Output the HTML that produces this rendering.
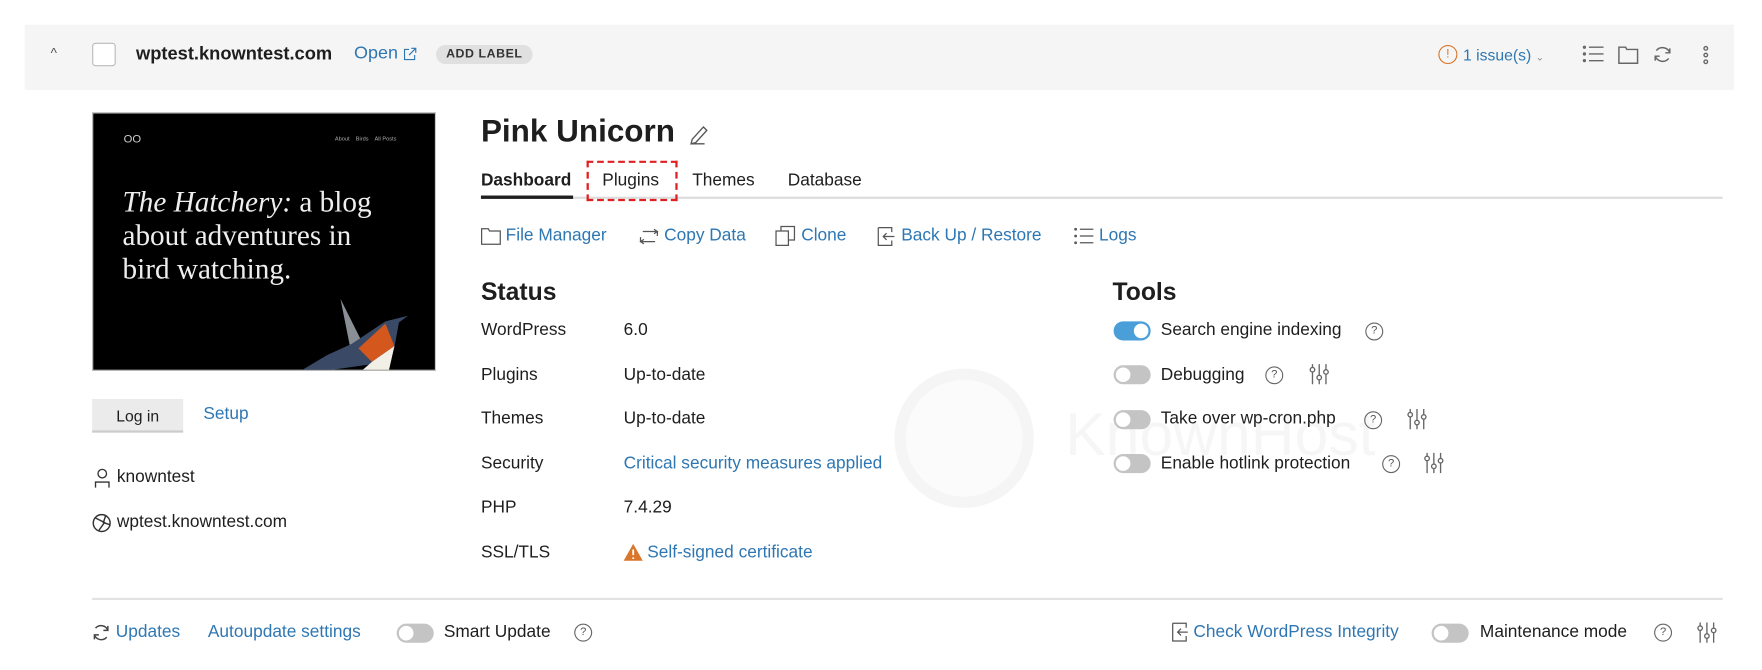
<!DOCTYPE html>
<html><head><meta charset="utf-8"><style>
*{margin:0;padding:0;box-sizing:border-box}
html,body{width:1762px;height:669px;overflow:hidden;background:#fff}
#w{position:absolute;left:0;top:0;width:1568px;height:596px;transform:scale(1.1237);transform-origin:0 0;font-family:"Liberation Sans",sans-serif;color:#1e1e1e;font-size:15.4px}
.a{position:absolute;white-space:nowrap}
.l{color:#2e77b3}
.tg{position:absolute;width:33px;height:17px;border-radius:9px;background:#c4c4c4}
.tg::after{content:"";position:absolute;left:2px;top:2px;width:13px;height:13px;border-radius:50%;background:#fff}
.tg.on{background:#4a9fd8}.tg.on::after{left:18px}
.q{position:absolute;width:16px;height:16px;border:1.3px solid #666;border-radius:50%;font-size:10px;text-align:center;line-height:14px;color:#555}
svg{position:absolute;overflow:visible}
</style></head><body><div id="w">
<div class="a" style="left:22px;top:22px;width:1521px;height:58px;background:#f5f5f5"></div>
<div class="a" style="left:45px;top:40px;font-size:12px;color:#555">^</div>
<div class="a" style="left:82px;top:38px;width:21px;height:21px;border:1px solid #bbb;border-radius:3px;background:#fff"></div>
<div class="a" style="left:121px;top:39px;font-size:16.3px;font-weight:bold">wptest.knowntest.com</div>
<div class="a l" style="left:315px;top:39px;font-size:16px">Open</div>
<svg style="left:359px;top:42px" width="12" height="12"><path d="M5 2H1v9h9V7M7 1h4v4M11 1L5 7" fill="none" stroke="#2e77b3" stroke-width="1"/></svg>
<div class="a" style="left:388px;top:40px;width:86px;height:17px;border-radius:9px;background:#e0e0e0;font-size:11px;font-weight:bold;text-align:center;line-height:17px;letter-spacing:.5px;color:#333">ADD LABEL</div>
<div class="a" style="left:1280px;top:40px;width:17px;height:17px;border:1.5px solid #d9762c;border-radius:50%;color:#d9762c;font-size:11px;text-align:center;line-height:14px">!</div>
<div class="a l" style="left:1302px;top:41px;font-size:14px">1 issue(s) <span style="font-size:9px;color:#888">&#8964;</span></div>
<svg style="left:1409px;top:41px" width="18" height="14"><g stroke="#666" stroke-width="1.3" fill="none"><path d="M5 1h13M5 7h13M5 13h13"/><circle cx="1" cy="1" r=".8"/><circle cx="1" cy="7" r=".8"/><circle cx="1" cy="13" r=".8"/></g></svg>
<svg style="left:1440px;top:41px" width="18" height="16"><path d="M.7 1h6l1 2h9.6v12.3H.7z" fill="none" stroke="#666" stroke-width="1.3"/></svg>
<svg style="left:1471px;top:40px" width="17" height="17"><path d="M3 5A7 7 0 0 1 15 7M14 12A7 7 0 0 1 2 10M15 3v4h-4M2 14v-4h4" fill="none" stroke="#666" stroke-width="1.3"/></svg>
<svg style="left:1515px;top:41px" width="6" height="16"><g fill="none" stroke="#666" stroke-width="1.2"><circle cx="3" cy="2" r="1.6"/><circle cx="3" cy="8" r="1.6"/><circle cx="3" cy="14" r="1.6"/></g></svg>

<div class="a" style="left:82px;top:100px;width:306px;height:230px;background:#000;border:1px solid #ccc;overflow:hidden">
<div class="a" style="left:27px;top:18px;color:#ccc;font-size:10px">OO</div>
<div class="a" style="left:215px;top:20px;color:#aaa;font-size:5px">About &nbsp;&nbsp; Birds &nbsp;&nbsp; All Posts</div>
<div class="a" style="left:26px;top:64px;color:#eee;font-family:'Liberation Serif',serif;font-size:26px;line-height:30px"><i>The Hatchery:</i> a blog<br>about adventures in<br>bird watching.</div>
<svg style="left:160px;top:165px" width="150" height="72"><path d="M60 0l20 40 -10 10z" fill="#8a8f96"/><path d="M70 40l30 -20 20 -5 -8 6 -4 22 -20 15 -70 10 30 -18z" fill="#3a4a66"/><path d="M100 22l8 20 -20 14 -12 -12z" fill="#d4581e"/><path d="M88 56l20 -14 -5 22 -30 5z" fill="#f2efe6"/></svg>
</div>
<div class="a" style="left:82px;top:355px;width:81px;height:30px;background:#ebebeb;border-bottom:2px solid #ccc;text-align:center;line-height:30px;font-size:14px">Log in</div>
<div class="a l" style="left:181px;top:360px">Setup</div>
<svg style="left:84px;top:417px" width="14" height="17"><g fill="none" stroke="#333" stroke-width="1.2"><circle cx="7" cy="4.5" r="3.8"/><path d="M1 17v-5h12v5"/></g></svg>
<div class="a" style="left:104px;top:416px">knowntest</div>
<svg style="left:82px;top:457px" width="17" height="17"><g fill="none" stroke="#333" stroke-width="1.3"><circle cx="8.5" cy="8.5" r="7.5"/><path d="M3 4l8 4-5 7M12 2l-2 6 6 2"/></g></svg>
<div class="a" style="left:104px;top:456px">wptest.knowntest.com</div>

<div class="a" style="left:428px;top:101px;font-size:28px;font-weight:bold">Pink Unicorn</div>
<svg style="left:614px;top:111px" width="17" height="18"><path d="M2 13l10-11 3 3-10 11-4 1zM1 17h12" fill="none" stroke="#555" stroke-width="1.2"/></svg>
<div class="a" style="left:428px;top:175px;width:1105px;height:2px;background:#ddd"></div>
<div class="a" style="left:428px;top:152px;font-weight:bold">Dashboard</div>
<div class="a" style="left:428px;top:174px;width:82px;height:3px;background:#1e1e1e"></div>
<div class="a" style="left:536px;top:152px">Plugins</div>
<div class="a" style="left:616px;top:152px">Themes</div>
<div class="a" style="left:701px;top:152px">Database</div>
<div class="a" style="left:522px;top:143px;width:81px;height:36px;border:2px dashed #e02020"></div>

<svg style="left:428px;top:203px" width="18" height="15"><path d="M.6.6h6l1 2h9.6v11.8H.6z" fill="none" stroke="#555" stroke-width="1.1"/></svg>
<div class="a l" style="left:450px;top:201px">File Manager</div>
<svg style="left:569px;top:203px" width="17" height="15"><path d="M3 3h13v4M14 12H1V8M13 1l3 2-3 2M4 10l-3 2 3 2" fill="none" stroke="#555" stroke-width="1.1"/></svg>
<div class="a l" style="left:591px;top:201px">Copy Data</div>
<svg style="left:690px;top:201px" width="18" height="18"><path d="M.6 4.6h11v12.8H.6zM5 4.6V.6h12v12h-5" fill="none" stroke="#555" stroke-width="1.1"/></svg>
<div class="a l" style="left:713px;top:201px">Clone</div>
<svg style="left:781px;top:202px" width="16" height="17"><path d="M.6.6h12v4M12.6 12v4.4H.6V.6M15 8.5H5M8 5.5l-3 3 3 3" fill="none" stroke="#555" stroke-width="1.1"/></svg>
<div class="a l" style="left:802px;top:201px">Back Up / Restore</div>
<svg style="left:956px;top:203px" width="17" height="14"><g stroke="#555" stroke-width="1.1" fill="none"><path d="M5 1h12M5 7h12M5 13h12"/><circle cx="1.2" cy="1" r=".7"/><circle cx="1.2" cy="7" r=".7"/><circle cx="1.2" cy="13" r=".7"/></g></svg>
<div class="a l" style="left:978px;top:201px">Logs</div>

<div class="a" style="left:796px;top:328px;width:124px;height:124px;border-radius:50%;border:10px solid #f5f5f5;background:#fbfbfb"></div>
<div class="a" style="left:948px;top:356px;font-size:54px;color:#f6f6f6">KnownHost</div>

<div class="a" style="left:428px;top:247px;font-size:22px;font-weight:bold">Status</div>
<div class="a" style="left:428px;top:285px">WordPress</div><div class="a" style="left:555px;top:285px">6.0</div>
<div class="a" style="left:428px;top:325px">Plugins</div><div class="a" style="left:555px;top:325px">Up-to-date</div>
<div class="a" style="left:428px;top:364px">Themes</div><div class="a" style="left:555px;top:364px">Up-to-date</div>
<div class="a" style="left:428px;top:404px">Security</div><div class="a l" style="left:555px;top:404px">Critical security measures applied</div>
<div class="a" style="left:428px;top:443px">PHP</div><div class="a" style="left:555px;top:443px">7.4.29</div>
<div class="a" style="left:428px;top:483px">SSL/TLS</div>
<svg style="left:555px;top:484px" width="17" height="15"><path d="M8.5 0L17 15H0z" fill="#d9762c"/><path d="M8.5 5v5M8.5 12v1.5" stroke="#fff" stroke-width="1.6"/></svg>
<div class="a l" style="left:576px;top:483px">Self-signed certificate</div>

<div class="a" style="left:990px;top:247px;font-size:22px;font-weight:bold">Tools</div>
<div class="tg on" style="left:991px;top:286px"></div><div class="a" style="left:1033px;top:285px">Search engine indexing</div><div class="q" style="left:1215px;top:287px">?</div>
<div class="tg" style="left:991px;top:325px"></div><div class="a" style="left:1033px;top:325px">Debugging</div><div class="q" style="left:1126px;top:326px">?</div>
<div class="tg" style="left:991px;top:365px"></div><div class="a" style="left:1033px;top:364px">Take over wp-cron.php</div><div class="q" style="left:1214px;top:366px">?</div>
<div class="tg" style="left:991px;top:404px"></div><div class="a" style="left:1033px;top:404px">Enable hotlink protection</div><div class="q" style="left:1230px;top:405px">?</div>
<svg style="left:1165px;top:324px" width="18" height="18"><g stroke="#666" stroke-width="1.2" fill="#fff"><path d="M3 0v18M9 0v18M15 0v18"/><circle cx="3" cy="5" r="2"/><circle cx="9" cy="12" r="2"/><circle cx="15" cy="7" r="2"/></g></svg>
<svg style="left:1252px;top:364px" width="18" height="18"><g stroke="#666" stroke-width="1.2" fill="#fff"><path d="M3 0v18M9 0v18M15 0v18"/><circle cx="3" cy="5" r="2"/><circle cx="9" cy="12" r="2"/><circle cx="15" cy="7" r="2"/></g></svg>
<svg style="left:1267px;top:403px" width="18" height="18"><g stroke="#666" stroke-width="1.2" fill="#fff"><path d="M3 0v18M9 0v18M15 0v18"/><circle cx="3" cy="5" r="2"/><circle cx="9" cy="12" r="2"/><circle cx="15" cy="7" r="2"/></g></svg>

<div class="a" style="left:82px;top:532px;width:1451px;height:2px;background:#e2e2e2"></div>
<svg style="left:82px;top:555px" width="16" height="16"><path d="M3 4A6.5 6.5 0 0 1 14 6M13 12A6.5 6.5 0 0 1 2 10M14 2v4h-4M2 14v-4h4" fill="none" stroke="#444" stroke-width="1.3"/></svg>
<div class="a l" style="left:103px;top:554px">Updates</div>
<div class="a l" style="left:185px;top:554px">Autoupdate settings</div>
<div class="tg" style="left:353px;top:555px"></div>
<div class="a" style="left:395px;top:554px">Smart Update</div>
<div class="q" style="left:511px;top:555px">?</div>
<svg style="left:1043px;top:554px" width="15" height="17"><path d="M.6.6h12v4M12.6 12v4.4H.6V.6M14 8.5H5M8 5.5l-3 3 3 3" fill="none" stroke="#555" stroke-width="1.1"/></svg>
<div class="a l" style="left:1062px;top:554px">Check WordPress Integrity</div>
<div class="tg" style="left:1274px;top:555px"></div>
<div class="a" style="left:1317px;top:554px">Maintenance mode</div>
<div class="q" style="left:1472px;top:555px">?</div>
<svg style="left:1510px;top:554px" width="18" height="18"><g stroke="#666" stroke-width="1.2" fill="#fff"><path d="M3 0v18M9 0v18M15 0v18"/><circle cx="3" cy="5" r="2"/><circle cx="9" cy="12" r="2"/><circle cx="15" cy="7" r="2"/></g></svg>
</div></body></html>
